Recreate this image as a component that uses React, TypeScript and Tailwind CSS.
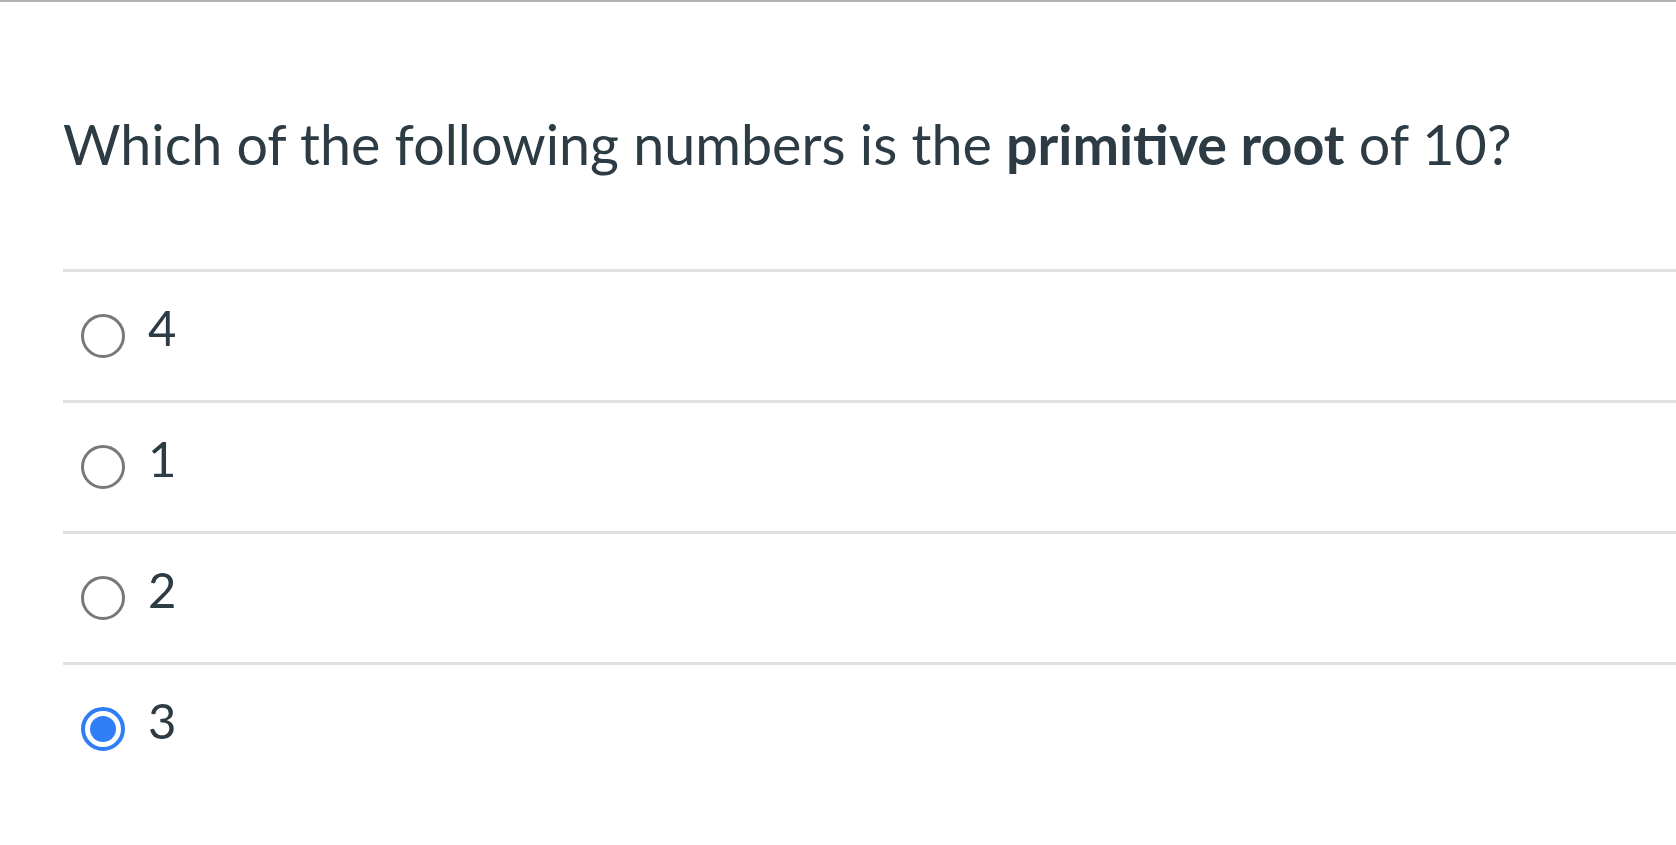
import React, { useState } from 'react';

const ANSWERS = ['4', '1', '2', '3'];

const Radio: React.FC<{ checked: boolean }> = ({ checked }) =>
  checked ? (
    <span className="flex h-[44px] w-[44px] shrink-0 items-center justify-center rounded-full border-[4px] border-[#2f7ef6] bg-white">
      <span className="h-[26px] w-[26px] rounded-full bg-[#2f7ef6]" />
    </span>
  ) : (
    <span className="h-[44px] w-[44px] shrink-0 rounded-full border-[3px] border-[#787878] bg-white" />
  );

const App: React.FC = () => {
  const [picked, setPicked] = useState('3');

  return (
    <div
      className="min-h-screen w-full overflow-hidden border-t-[2px] border-[#b3b3b3] bg-white text-[#2d3b45]"
      style={{ fontFamily: '"Lato", "Helvetica Neue", Helvetica, Arial, sans-serif' }}
    >
      {/* 질문 */}
      <div className="pl-[63px] pt-[109px] pb-[92px]">
        <p className="whitespace-nowrap text-[55.6px] leading-[66px]">
          Which of the following numbers is the <strong className="font-bold">primitive root</strong> of 10?
        </p>
      </div>

      {/* 보기 목록 */}
      <div className="ml-[63px] w-[1700px]">
        {ANSWERS.map((a) => (
          <label
            key={a}
            onClick={() => setPicked(a)}
            className="flex h-[131px] cursor-pointer items-center border-t-[3px] border-[#e0e0e0] pl-[18px]"
          >
            <Radio checked={picked === a} />
            <span className="ml-[23px] mb-[18px] text-[49px] leading-[58px]">{a}</span>
          </label>
        ))}
      </div>
    </div>
  );
};

export default App;
